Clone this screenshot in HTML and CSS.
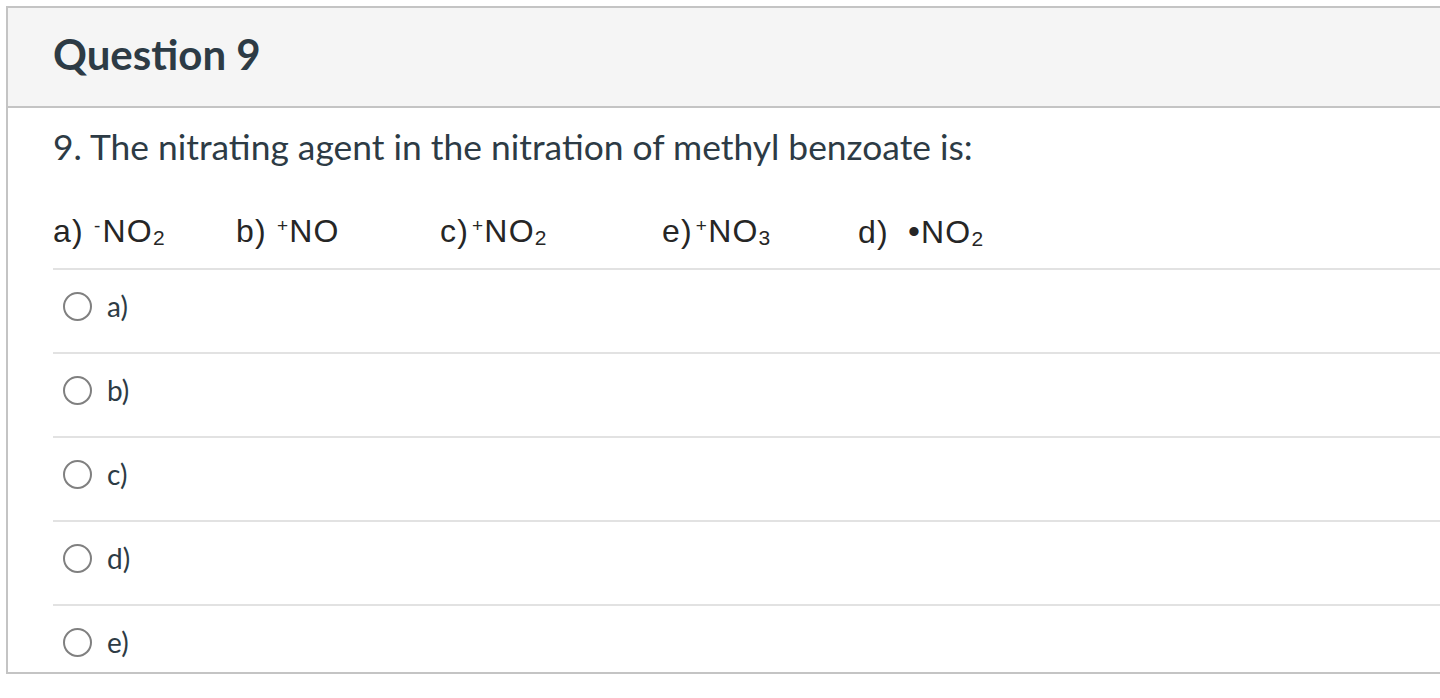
FILE: index.html
```html
<!DOCTYPE html>
<html lang="en">
<head>
<meta charset="utf-8">
<title>Question 9</title>
<link rel="stylesheet" href="styles.css">
</head>
<body>
<div class="question">
  <div class="q-header">
    <h2 class="q-title">Question 9</h2>
  </div>
  <div class="q-body">
    <p class="q-text">9. The nitrating agent in the nitration of methyl benzoate is:</p>
    <div class="formula">
      <span class="f-item f-a">a) <sup class="sup-minus">-</sup>NO<sub>2</sub></span>
      <span class="f-item f-b">b) <sup class="sup-plus">+</sup>NO</span>
      <span class="f-item f-c">c)<sup class="sup-plus2">+</sup>NO<sub>2</sub></span>
      <span class="f-item f-e">e)<sup class="sup-plus2">+</sup>NO<sub>3</sub></span>
      <span class="f-item f-d">d) <span class="dot">&bull;</span>NO<sub>2</sub></span>
    </div>
    <div class="answers">
      <label class="answer"><span class="radio"></span><span class="a-label">a)</span></label>
      <label class="answer"><span class="radio"></span><span class="a-label">b)</span></label>
      <label class="answer"><span class="radio"></span><span class="a-label">c)</span></label>
      <label class="answer"><span class="radio"></span><span class="a-label">d)</span></label>
      <label class="answer"><span class="radio"></span><span class="a-label">e)</span></label>
    </div>
  </div>
</div>
</body>
</html>
```
FILE: styles.css
```css
html, body {
  margin: 0;
  padding: 0;
  background: #ffffff;
  overflow: hidden;
}
body {
  font-family: Lato, "Open Sans", sans-serif;
  color: #2d3b45;
}
.question {
  margin: 6px 0 0 6px;
  width: 1500px;
  height: 664px;
  border: 2px solid #c4c4c4;
  border-right: none;
  overflow: hidden;
  background: #ffffff;
}
.q-header {
  background: #f5f5f5;
  border-bottom: 2px solid #c4c4c4;
  height: 100px;
  box-sizing: border-box;
  padding: 21px 0 0 45px;
}
.q-title {
  margin: 0;
  font-size: 42px;
  line-height: 1.2;
  font-weight: 700;
  color: #2d3b45;
}
.q-body {
  padding-left: 45px;
}
.q-text {
  margin: 18px 0 0 0;
  font-size: 35.4px;
  line-height: 41px;
  color: #2d3b45;
}
.formula {
  margin-top: 44px;
  margin-bottom: 17px;
  height: 40px;
  line-height: 40px;
  display: flex;
  font-family: "Liberation Sans", Arial, sans-serif;
  font-size: 32px;
  letter-spacing: 1.2px;
  color: #262626;
  white-space: nowrap;
}
.f-item { display: block; }
.f-a { width: 183px; }
.f-b { width: 204px; }
.f-c { width: 222px; }
.f-e { width: 196px; }
.formula sup {
  font-size: 19px;
  vertical-align: 10px;
  line-height: 0;
}
.sup-minus { margin-right: 1px; }
.sup-plus2 { font-size: 22px; margin: 0 0 0 3px; }
.formula sub {
  font-size: 21px;
  vertical-align: -3px;
  line-height: 0;
  letter-spacing: 0;
}
.dot { margin-left: 9px; font-size: 34px; }
.answers {
  display: flex;
  flex-direction: column;
}
.answer {
  display: flex;
  height: 82px;
  box-sizing: content-box;
  border-top: 2px solid #e2e2e2;
  padding: 0 0 0 10px;
  align-items: flex-start;
}
.radio {
  width: 25px;
  height: 25px;
  margin-top: 22px;
  border: 2px solid #808080;
  border-radius: 50%;
  flex: none;
  background: #ffffff;
}
.a-label {
  margin-left: 15px;
  font-size: 28px;
  line-height: 30px;
  margin-top: 21px;
  color: #2d3b45;
}
```
